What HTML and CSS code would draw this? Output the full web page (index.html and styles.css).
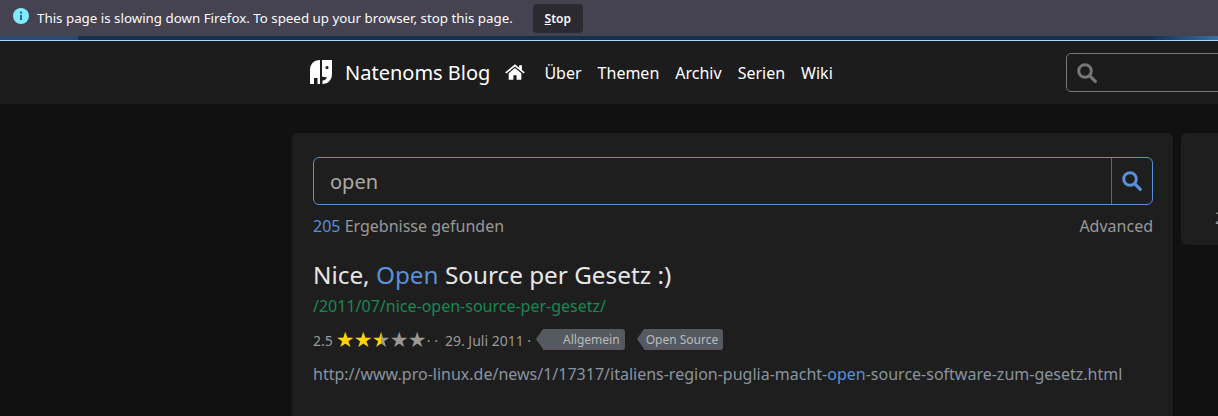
FILE: index.html
```html
<!DOCTYPE html>
<html lang="de">
<head>
  <meta charset="UTF-8">
  <title>Natenoms Blog</title>
  <link rel="stylesheet" href="styles.css">
</head>
<body>
  <div class="notice">
    <svg class="notice-icon" viewBox="0 0 16 16"><circle cx="8" cy="8" r="8" fill="#80ebff"/><rect x="7.100" y="7" width="1.800" height="5" fill="#1c5a70"/><circle cx="8" cy="4.600" r="1.100" fill="#1c5a70"/></svg>
    <span class="notice-text">This page is slowing down Firefox. To speed up your browser, stop this page.</span>
    <button class="notice-btn"><u>S</u>top</button>
  </div>
  <div class="progress"></div>

  <nav class="navbar">
    <a class="brand">
      <svg class="brand-logo" viewBox="0 0 22 24"><path fill="#fff" d="M10 0V24H7.500V18H4V24H0V10C0 4 4 0 10 0ZM12 0H22V14C22 20 18 24 12.500 24V20.500C15 20.500 16.500 19 17 17C15 17.500 13.500 17 12 16.500ZM17 5.900a1.600 1.600 0 1 0 0 3.200 1.600 1.600 0 0 0 0-3.200Z"/></svg>
      <span>Natenoms Blog</span>
    </a>
    <svg class="nav-home" viewBox="0 0 20 16"><path fill="#fff" d="M10 .3 14.200 3.700V1.300h2.700V5.900L19.800 8.300l-1.100 1.300L10 2.600 1.300 9.600.2 8.300zM10 4.100l6.300 5.100v6.500h-4.700v-4.400H8.400v4.400H3.700V9.200z"/></svg>
    <a class="nav-link">Über</a>
    <a class="nav-link">Themen</a>
    <a class="nav-link">Archiv</a>
    <a class="nav-link">Serien</a>
    <a class="nav-link">Wiki</a>
    <div class="nav-search">
      <svg class="search-icon" viewBox="0 0 20 20"><circle cx="8" cy="8" r="6.300" fill="none" stroke="currentColor" stroke-width="3"/><path d="m12.800 12.800 5.500 5.500" stroke="currentColor" stroke-width="3.200" stroke-linecap="round"/></svg>
    </div>
  </nav>

  <div class="page">
    <main class="card results">
      <div class="search-box">
        <div class="search-input">open</div>
        <div class="search-btn">
          <svg class="search-icon" viewBox="0 0 20 20"><circle cx="8" cy="8" r="6.300" fill="none" stroke="currentColor" stroke-width="3"/><path d="m12.800 12.800 5.500 5.500" stroke="currentColor" stroke-width="3.200" stroke-linecap="round"/></svg>
        </div>
      </div>
      <div class="result-info">
        <span><span class="hl">205</span> Ergebnisse gefunden</span>
        <a>Advanced</a>
      </div>
      <h2 class="result-title">Nice, <span class="hl">Open</span> Source per Gesetz :)</h2>
      <div class="result-path">/2011/07/nice-open-source-per-gesetz/</div>
      <div class="result-meta">
        <span>2.5</span>
        <span class="stars">
          <span class="star on">★</span><span class="star on">★</span><span class="star half">★</span><span class="star">★</span><span class="star">★</span>
        </span>
        <span class="dots">· ·</span>
        <span class="date">29. Juli 2011 ·</span>
        <span class="tag tag-wide">Allgemein</span>
        <span class="tag">Open Source</span>
      </div>
      <p class="result-text">http://www.pro-linux.de/news/1/17317/italiens-region-puglia-macht-<span class="hl">open</span>-source-software-zum-gesetz.html</p>
    </main>
    <aside class="card side">2</aside>
  </div>
</body>
</html>
```

FILE: styles.css
```css
html, body {
  height: 416px;
  overflow: hidden;
}
body {
  margin: 0;
  background-color: #111;
  color: #aaa;
  font-family: "Noto Sans", "Open Sans", sans-serif;
  font-size: 14px;
}
a {
  color: inherit;
}

/* firefox bar */
.notice {
  display: flex;
  align-items: center;
  height: 36px;
  background-color: #45434f;
  padding-left: 13px;
  box-sizing: border-box;
}
.notice-icon {
  flex: none;
  width: 16px;
  height: 16px;
  margin-top: -5px;
}
.notice-text {
  margin-left: 8px;
  font-size: 13.330px;
  color: #fbfbfe;
}
.notice-btn {
  margin-left: 20px;
  width: 50px;
  height: 29px;
  padding: 0;
  border: none;
  border-radius: 4px;
  background-color: #2b2a33;
  color: #fbfbfe;
  font-family: inherit;
  font-size: 12px;
  font-weight: 600;
}
.progress {
  height: 4px;
  border-bottom: 1px solid #a8d8f8;
  background: linear-gradient(90deg, #2a4a75 0, #2a4a75 78px, #15304f 78px, #15304f 1150px, #3a6ea5 100%);
}

/* navbar */
.navbar {
  display: flex;
  align-items: center;
  height: 63px;
  padding-left: 310px;
  background-color: #1c1c1c;
  color: #fff;
  white-space: nowrap;
  overflow: hidden;
}
.brand {
  display: flex;
  flex: none;
  align-items: center;
  font-size: 20px;
}
.brand-logo {
  flex: none;
  width: 22px;
  height: 24px;
  margin: -1px 13px 0 0;
}
.nav-home {
  flex: none;
  width: 20px;
  height: 16px;
  margin: -2px 11px 0 15px;
}
.nav-link {
  flex: none;
  margin-left: 16px;
  font-size: 16px;
}
.nav-home + .nav-link {
  margin-left: 8px;
}
.nav-search {
  display: flex;
  align-items: center;
  flex: none;
  box-sizing: border-box;
  width: 200px;
  height: 39px;
  margin-left: 233px;
  padding-left: 10px;
  border: 1px solid #777;
  border-radius: 5px;
  color: #777;
}
.search-icon {
  flex: none;
  width: 20px;
  height: 20px;
}

/* content */
.page {
  display: flex;
  gap: 8px;
  padding: 29px 0 0 292px;
  overflow: hidden;
}
.card {
  flex: none;
  background-color: #1e1e1e;
  border-radius: 6px;
  box-sizing: border-box;
}
.results {
  width: 881px;
  height: 300px;
  padding: 24px 20px 24px 21px;
}
.side {
  width: 200px;
  height: 112px;
  padding: 73px 0 0 34px;
  font-size: 16px;
  line-height: 24px;
  color: #999;
}
.search-box {
  display: flex;
  height: 48px;
  border: 1px solid #5a90d8;
  border-radius: 6px;
  box-sizing: border-box;
}
.search-input {
  flex: 1;
  padding-left: 16px;
  font-size: 20px;
  line-height: 48px;
  color: #aaa;
}
.search-btn {
  display: flex;
  align-items: center;
  justify-content: center;
  width: 40px;
  border-left: 1px solid #666;
  color: #5a90d8;
}
.hl {
  color: #5a90d8;
}
.result-info {
  display: flex;
  justify-content: space-between;
  margin-top: 9px;
  font-size: 16px;
  line-height: 24px;
  color: #999;
}
.result-title {
  margin: 20px 0 0;
  font-size: 24.300px;
  font-weight: 400;
  line-height: 34px;
  color: #e6e6e6;
}
.result-path {
  margin-top: 1px;
  font-size: 16px;
  line-height: 26px;
  color: #198754;
}
.result-meta {
  display: flex;
  align-items: center;
  margin-top: 9px;
  height: 24px;
  font-size: 14px;
  color: #999;
}
.stars {
  display: flex;
  margin-left: 3px;
  font-size: 21px;
  color: #999;
}
.star {
  width: 18px;
  text-align: center;
  font-family: "DejaVu Sans", sans-serif;
}
.star.on {
  color: #ffd500;
}
.star.half {
  background: linear-gradient(90deg, #ffd500 50%, #999 50%);
  -webkit-background-clip: text;
  background-clip: text;
  color: transparent;
}
.dots {
  margin-left: 1px;
}
.date {
  margin-left: 7px;
}
.tag {
  position: relative;
  margin: -1px 0 0 19px;
  padding: 0 5px 0 2px;
  height: 21px;
  line-height: 21px;
  font-size: 12px;
  color: #bbb;
  background-color: #555a60;
  border-radius: 0 3px 3px 0;
}
.tag::before {
  content: "";
  position: absolute;
  left: -7px;
  top: 0;
  border-style: solid;
  border-width: 10.500px 7px 10.500px 0;
  border-color: transparent #555a60 transparent transparent;
}
.tag-wide {
  padding-left: 20px;
  margin-left: 12px;
}
.result-text {
  margin: 10px 0 0;
  font-size: 16px;
  line-height: 24px;
  color: #8a94a0;
  white-space: nowrap;
}
```
